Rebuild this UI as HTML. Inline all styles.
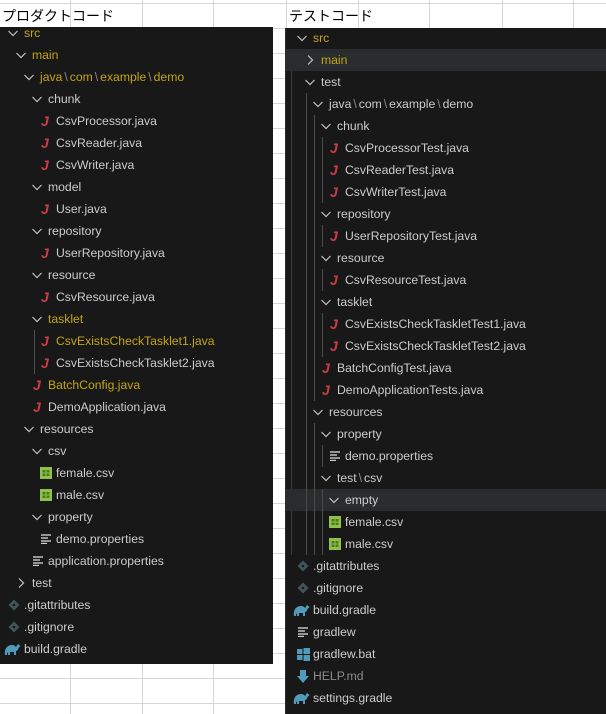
<!DOCTYPE html>
<html><head><meta charset="utf-8"><style>
*{margin:0;padding:0;box-sizing:border-box}
html,body{width:606px;height:714px;overflow:hidden;background:#fff}
body{position:relative;font-family:"Liberation Sans","Noto Sans CJK JP",sans-serif;
background-image:linear-gradient(#d6d6d6 1px,transparent 1px);background-size:100% 25px;background-position:0 3px}
.vl{position:absolute;top:0;bottom:0;width:1px;background:#d6d6d6}
.hdr{position:absolute;top:6px;font-size:14px;color:#000}
.panel{position:absolute;background:#181818;overflow:hidden}
.r{position:absolute;left:0;right:0;height:22px;font-size:12.2px;line-height:22px;color:#cccccc;white-space:nowrap}
.r.hl{background:#2a2d2e}
.y{color:#c5a416}
.t{position:absolute;top:0}
.ch{position:absolute;top:5px;width:12px;height:12px}
.ic{position:absolute;top:4px}
.J{position:absolute;top:0;font-weight:bold;font-style:italic;color:#cc3e44;font-size:14px;font-family:"Liberation Sans",sans-serif}
.g{position:absolute;top:0;width:1px;height:22px;background:#4b4b4b}
.sl{color:#8b8b8b}
.bs{color:#8b8b8b;padding:0 2px}
</style></head><body>
<div class="vl" style="left:70px"></div><div class="vl" style="left:142px"></div><div class="vl" style="left:213px"></div><div class="vl" style="left:286px"></div><div class="vl" style="left:358px"></div><div class="vl" style="left:429px"></div><div class="vl" style="left:502px"></div><div class="vl" style="left:573px"></div>
<div class="hdr" style="left:2px">プロダクトコード</div>
<div class="hdr" style="left:289px">テストコード</div>

<div class="panel" id="L" style="left:0;top:27px;width:273px;height:637px"></div>
<div class="panel" id="R" style="left:285px;top:28px;width:321px;height:686px;border-left:1px solid #2b2b2b"></div>

<script>
const down='<svg class="ch" viewBox="0 0 12 12"><polyline points="1.5,4 6,8.5 10.5,4" fill="none" stroke="#c5c5c5" stroke-width="1.2"/></svg>';
const right='<svg class="ch" viewBox="0 0 12 12"><polyline points="4,1.5 8.5,6 4,10.5" fill="none" stroke="#c5c5c5" stroke-width="1.2"/></svg>';
function icon(type,x){
 if(type=='J')return `<span class="J" style="left:${x+1}px">J</span>`;
 if(type=='csv')return `<svg class="ic" style="left:${x}px;top:5px" width="12" height="12" viewBox="0 0 12 12"><rect width="12" height="12" fill="#8dc149"/><rect x="2.5" y="3" width="3" height="2.5" fill="#4d7a20"/><rect x="6.5" y="3" width="3" height="2.5" fill="#4d7a20"/><rect x="2.5" y="6.5" width="3" height="2.5" fill="#4d7a20"/><rect x="6.5" y="6.5" width="3" height="2.5" fill="#4d7a20"/></svg>`;
 if(type=='prop')return `<svg class="ic" style="left:${x}px;top:6px" width="12" height="10" viewBox="0 0 12 10"><g stroke="#cccccc" stroke-width="1.4"><line x1="1" y1="1" x2="11" y2="1"/><line x1="1" y1="4" x2="8" y2="4"/><line x1="1" y1="7" x2="11" y2="7"/><line x1="1" y1="9.5" x2="7" y2="9.5"/></g></svg>`;
 if(type=='git')return `<svg class="ic" style="left:${x}px;top:5px" width="12" height="12" viewBox="0 0 12 12"><path d="M6 0.5 11.5 6 6 11.5 0.5 6Z" fill="#41535b"/><circle cx="6" cy="6" r="1.3" fill="#181818"/></svg>`;
 if(type=='gradle')return `<svg class="ic" style="left:${x}px;top:5px" width="17" height="12" viewBox="0 0 17 12"><path d="M1 12 C0 6 3 2 8 2 C10 2 11 3 12 4 L14 1 L16.5 3 L14.5 5 C14 7 13 8 12 8 L12 12 L10 12 L10 9 L6 9 L6 12 L4 12 L4 9 C3 10 3 11 3 12Z" fill="#519aba"/></svg>`;
 if(type=='win')return `<svg class="ic" style="left:${x}px;top:5px" width="13" height="13" viewBox="0 0 13 13"><g fill="#519aba"><rect x="0" y="1" width="5.5" height="5"/><rect x="6.5" y="0" width="6.5" height="6"/><rect x="0" y="7" width="5.5" height="5"/><rect x="6.5" y="7" width="6.5" height="6"/></g></svg>`;
 if(type=='md')return `<svg class="ic" style="left:${x}px;top:5px" width="12" height="13" viewBox="0 0 12 13"><path d="M3 0H9V6H12L6 13L0 6H3Z" fill="#519aba"/></svg>`;
 return '';
}
function build(id,rows,base,top0,guideX,pre){
 let h=pre||'';
 rows.forEach((r,i)=>{
  const [lvl,kind,name,cls,extra]=r;
  const tx=base+8*lvl;
  let inner='';
  (r[5]||[]).forEach(k=>{inner+=`<div class="g" style="left:${guideX+8*k}px"></div>`});
  if(kind=='d')inner+=down.replace('class="ch"',`class="ch" style="left:${tx-17}px"`);
  else if(kind=='c')inner+=right.replace('class="ch"',`class="ch" style="left:${tx-17}px"`);
  else inner+=icon(kind,kind=='gradle'?tx-20:tx-16);
  inner+=`<span class="t ${cls||''}" style="left:${tx}px">${name}</span>`;
  h+=`<div class="r ${extra||''}" style="top:${top0+22*i}px">${inner}</div>`;
 });
 document.getElementById(id).innerHTML=h;
}
const S='<span class="bs">\\</span>';
build('L',[
[0,'d','src','y'],[1,'d','main','y'],[2,'d','java'+S+'com'+S+'example'+S+'demo','y'],
[3,'d','chunk'],[4,'J','CsvProcessor.java'],[4,'J','CsvReader.java'],[4,'J','CsvWriter.java'],
[3,'d','model'],[4,'J','User.java'],[3,'d','repository'],[4,'J','UserRepository.java'],
[3,'d','resource'],[4,'J','CsvResource.java'],[3,'d','tasklet','y'],
[4,'J','CsvExistsCheckTasklet1.java','y','',[4]],[4,'J','CsvExistsCheckTasklet2.java','','',[4]],
[3,'J','BatchConfig.java','y'],[3,'J','DemoApplication.java'],
[2,'d','resources'],[3,'d','csv'],[4,'csv','female.csv'],[4,'csv','male.csv'],
[3,'d','property'],[4,'prop','demo.properties'],[3,'prop','application.properties'],
[1,'c','test'],[0,'git','.gitattributes'],[0,'git','.gitignore'],[0,'gradle','build.gradle']
],24,-5,2);
const g=n=>Array.from({length:n},(_,k)=>k+1);
build('R',[
[0,'d','src','y'],[1,'c','main','y','hl'],[1,'d','test',''],
[2,'d','java'+S+'com'+S+'example'+S+'demo','','',g(1)],
[3,'d','chunk','','',g(2)],[4,'J','CsvProcessorTest.java','','',g(3)],[4,'J','CsvReaderTest.java','','',g(3)],[4,'J','CsvWriterTest.java','','',g(3)],
[3,'d','repository','','',g(2)],[4,'J','UserRepositoryTest.java','','',g(3)],
[3,'d','resource','','',g(2)],[4,'J','CsvResourceTest.java','','',g(3)],
[3,'d','tasklet','','',g(2)],[4,'J','CsvExistsCheckTaskletTest1.java','','',g(3)],[4,'J','CsvExistsCheckTaskletTest2.java','','',g(3)],
[3,'J','BatchConfigTest.java','','',g(2)],[3,'J','DemoApplicationTests.java','','',g(2)],
[2,'d','resources','','',g(1)],[3,'d','property','','',g(2)],[4,'prop','demo.properties','','',g(3)],
[3,'d','test'+S+'csv','','',g(2)],[4,'d','empty','','hl',g(3)],[4,'csv','female.csv','','',g(3)],[4,'csv','male.csv','','',g(3)],
[0,'git','.gitattributes'],[0,'git','.gitignore'],[0,'gradle','build.gradle'],[0,'prop','gradlew'],
[0,'win','gradlew.bat'],[0,'md','HELP.md','sl'],[0,'gradle','settings.gradle']
],27,-1,12,'<div style="position:absolute;left:5px;top:21px;width:1px;height:506px;background:#3a3a3a"></div>');
</script>
</body></html>
